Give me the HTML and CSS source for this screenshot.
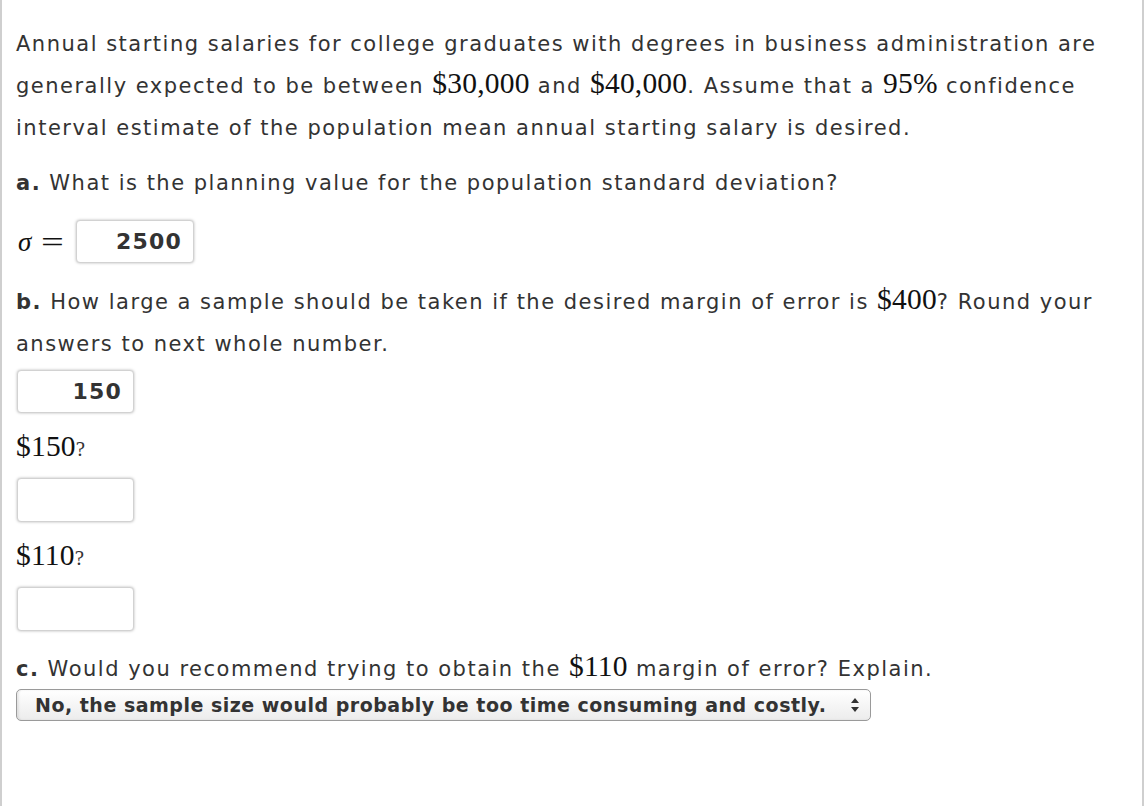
FILE: index.html
```html
<!DOCTYPE html>
<html>
<head>
<meta charset="utf-8">
<link rel="stylesheet" href="styles.css">
</head>
<body>
<div class="page">
  <p class="intro">Annual starting salaries for college graduates with degrees in business administration are generally expected to be between <span class="m">$30,000</span> and <span class="m">$40,000</span>. Assume that a <span class="m">95%</span> confidence interval estimate of the population mean annual starting salary is desired.</p>
  <p class="q qa"><b>a.</b> What is the planning value for the population standard deviation?</p>
  <div class="sigma-row">
    <span class="sigma"><i>σ</i><span class="eq">=</span></span>
    <div class="box"><span class="val">2500</span></div>
  </div>
  <p class="q qb"><b>b.</b> How large a sample should be taken if the desired margin of error is <span class="m">$400</span>? Round your answers to next whole number.</p>
  <div class="box box-b"><span class="val">150</span></div>
  <p class="ask"><span class="m">$150</span><span class="qm">?</span></p>
  <div class="box box-e"></div>
  <p class="ask"><span class="m">$110</span><span class="qm">?</span></p>
  <div class="box box-e"></div>
  <p class="q qc"><b>c.</b> Would you recommend trying to obtain the <span class="m">$110</span> margin of error? Explain.</p>
  <div class="select">
    <span class="sel-text">No, the sample size would probably be too time consuming and costly.</span>
    <svg class="arrows" width="8" height="14" viewBox="0 0 8 14"><path d="M4 0 L8 5 L0 5 Z M4 14 L8 9 L0 9 Z" fill="#333"/></svg>
  </div>
</div>
</body>
</html>
```
FILE: styles.css
```css
html, body {
  margin: 0;
  padding: 0;
  background: #fff;
}
.page {
  box-sizing: border-box;
  width: 1144px;
  height: 806px;
  border-left: 2px solid #cfcfcf;
  border-right: 2px solid #cfcfcf;
  padding: 23px 0 0 14px;
  font-family: "DejaVu Sans", Verdana, sans-serif;
  font-size: 21px;
  letter-spacing: 1.5px;
  line-height: 42px;
  color: #333;
}
p { margin: 0; }
.m {
  font-family: "Liberation Serif", "DejaVu Serif", serif;
  font-size: 29.5px;
  letter-spacing: 0.2px;
  line-height: 0;
  color: #111;
}
.intro { width: 1115px; }
.qa { margin-top: 13px; }
.sigma-row {
  display: flex;
  align-items: center;
  margin-top: 16px;
  height: 43px;
}
.sigma {
  display: flex;
  align-items: center;
  font-family: "Liberation Serif", "DejaVu Serif", serif;
  font-size: 27px;
  letter-spacing: 0;
  color: #111;
  width: 58px;
  padding-left: 2px;
}
.eq {
  font-size: 30px;
  margin-left: 13px;
  transform: scaleX(1.35);
}
.box {
  box-sizing: border-box;
  width: 118px;
  height: 43px;
  border: 1px solid #d2d2d2;
  border-radius: 4px;
  box-shadow: 0 0 3px rgba(0,0,0,0.28);
  background: #fff;
  display: flex;
  align-items: center;
  justify-content: flex-end;
  padding-right: 11px;
}
.val {
  font-weight: bold;
  font-size: 22px;
  letter-spacing: 1.2px;
  color: #333;
}
.qb { margin-top: 18px; width: 1115px; }
.box-b { margin-top: 5px; margin-left: 1px; width: 117px; }
.ask { margin-top: 15px; line-height: 42px; }
.qm {
  font-family: "Liberation Serif", "DejaVu Serif", serif;
  font-size: 21px;
  letter-spacing: 0;
  color: #333;
}
.box-e { margin-top: 8px; margin-left: 1px; width: 117px; height: 44px; }
.qc { margin-top: 17px; }
.select {
  box-sizing: border-box;
  width: 855px;
  height: 32px;
  margin-top: -1px;
  border: 1px solid #9a9a9a;
  border-radius: 5px;
  background: linear-gradient(#ffffff, #ececec);
  box-shadow: inset 2px 0 2px rgba(0,0,0,0.08);
  display: flex;
  align-items: center;
  padding-left: 18px;
  padding-right: 11px;
}
.sel-text {
  flex: 1;
  font-weight: bold;
  font-size: 19px;
  letter-spacing: 0.5px;
  line-height: 30px;
  color: #333;
}
.arrows { display: block; }
```
